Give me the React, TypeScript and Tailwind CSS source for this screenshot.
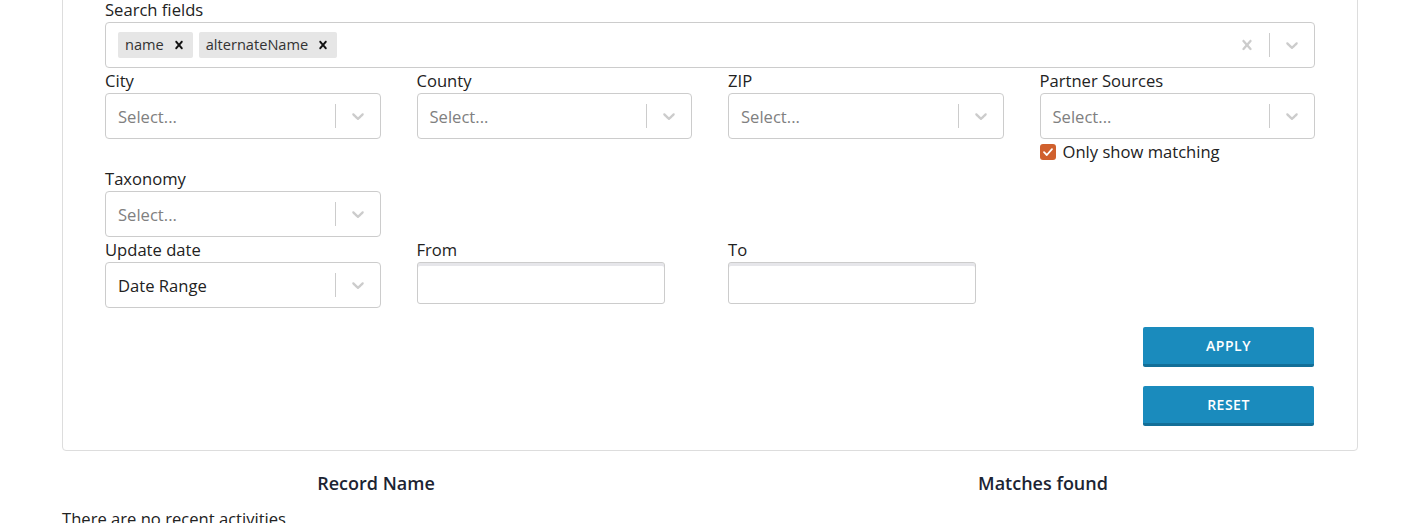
import React from "react";

const Chevron = () => (
  <svg width="20" height="20" viewBox="0 0 20 20" className="fill-[#cccccc]">
    <path d="M4.516 7.548c0.436-0.446 1.043-0.481 1.576 0l3.908 3.747 3.908-3.747c0.533-0.481 1.141-0.446 1.574 0 0.436 0.445 0.408 1.197 0 1.615-0.406 0.418-4.695 4.502-4.695 4.502-0.217 0.223-0.502 0.335-0.787 0.335s-0.57-0.112-0.789-0.335c0 0-4.287-4.084-4.695-4.502s-0.436-1.17 0-1.615z" />
  </svg>
);

const Cross = ({ size = 20, cls = "fill-[#cccccc]" }: { size?: number; cls?: string }) => (
  <svg width={size} height={size} viewBox="0 0 20 20" className={cls}>
    <path d="M14.348 14.849c-0.469 0.469-1.229 0.469-1.697 0l-2.651-3.030-2.651 3.029c-0.469 0.469-1.229 0.469-1.697 0-0.469-0.469-0.469-1.229 0-1.697l2.758-3.150-2.759-3.152c-0.469-0.469-0.469-1.228 0-1.697s1.228-0.469 1.697 0l2.652 3.031 2.651-3.031c0.469-0.469 1.228-0.469 1.697 0s0.469 1.229 0 1.697l-2.758 3.152 2.758 3.150c0.469 0.469 0.469 1.229 0 1.698z" />
  </svg>
);

const Label = ({ children }: { children: React.ReactNode }) => (
  <div className="h-[24px] leading-[24px] text-[16.6px] text-[#222]">{children}</div>
);

const Select = ({ value, placeholder = "Select..." }: { value?: string; placeholder?: string }) => (
  <div className="flex h-[46px] items-center rounded-[4px] border border-[#cccccc] bg-white">
    <div className={`flex-1 pl-[12px] pt-[2px] text-[16.6px] ${value ? "text-[#222]" : "text-[#808080]"}`}>
      {value ?? placeholder}
    </div>
    <div className="h-[24px] w-px bg-[#cccccc]" />
    <div className="flex w-[44px] justify-center">
      <Chevron />
    </div>
  </div>
);

const Chip = ({ text }: { text: string }) => (
  <div className="flex h-[26px] items-center rounded-[2px] bg-[#e6e6e6] pl-[7px] pr-[6px] text-[14.6px] text-[#333]">
    <span>{text}</span>
    <span className="ml-[7px] flex items-center">
      <Cross size={16} cls="fill-[#111]" />
    </span>
  </div>
);

const DateInput = () => (
  <div className="h-[42px] w-[248px] rounded-[3px] border border-[#cccccc] bg-white shadow-[inset_0_3px_0_#e6e6ea]" />
);

export default function App() {
  return (
    <div className="min-h-[523px] bg-white" style={{ fontFamily: '"Open Sans", "Noto Sans", sans-serif' }}>
      <div className="ml-[62px] mt-[-30px] w-[1296px] rounded-[4px] border border-[#dddddd] px-[42px] pb-[24px] pt-[27px]">
        <Label>Search fields</Label>
        <div className="flex h-[46px] items-center rounded-[4px] border border-[#cccccc] bg-white">
          <div className="flex flex-1 gap-[6px] pl-[12px]">
            <Chip text="name" />
            <Chip text="alternateName" />
          </div>
          <div className="flex w-[44px] justify-center">
            <Cross />
          </div>
          <div className="h-[24px] w-px bg-[#cccccc]" />
          <div className="flex w-[44px] justify-center">
            <Chevron />
          </div>
        </div>
        <div className="mt-[1px] grid grid-cols-4 gap-x-[36px]">
          <div>
            <Label>City</Label>
            <Select />
          </div>
          <div>
            <Label>County</Label>
            <Select />
          </div>
          <div>
            <Label>ZIP</Label>
            <Select />
          </div>
          <div>
            <Label>Partner Sources</Label>
            <Select />
            <div className="flex h-[28px] items-center gap-[7px] pb-[2px]">
              <span className="flex h-[16px] w-[16px] items-center justify-center rounded-[3px] bg-[#d0602d]">
                <svg width="12" height="12" viewBox="0 0 12 12" fill="none">
                  <path d="M2 6.2 L4.8 9 L10 3.2" stroke="white" strokeWidth="1.8" strokeLinecap="round" strokeLinejoin="round" />
                </svg>
              </span>
              <span className="text-[16.6px] text-[#222]">Only show matching</span>
            </div>
          </div>
          <div>
            <Label>Taxonomy</Label>
            <Select />
          </div>
          <div />
          <div />
          <div />
          <div className="mt-[1px]">
            <Label>Update date</Label>
            <Select value="Date Range" />
          </div>
          <div className="mt-[1px]">
            <Label>From</Label>
            <DateInput />
          </div>
          <div className="mt-[1px]">
            <Label>To</Label>
            <DateInput />
          </div>
          <div />
        </div>
        <div className="mt-[19px] mr-px flex flex-col items-end gap-[19px]">
          <button className="h-[40px] w-[171px] rounded-[2px] border-b-[3px] border-[#136f98] bg-[#1a8bbd] text-[14px] font-semibold tracking-[0.5px] text-white">
            APPLY
          </button>
          <button className="h-[40px] w-[171px] rounded-[2px] border-b-[3px] border-[#136f98] bg-[#1a8bbd] text-[14px] font-semibold tracking-[0.5px] text-white">
            RESET
          </button>
        </div>
      </div>
      <div className="ml-[62px] mt-[18px] flex h-[28px] items-center text-[18px] font-semibold text-[#1c2433]">
        <div className="w-[628px] text-center">Record Name</div>
        <div className="w-[706px] text-center">Matches found</div>
      </div>
      <div className="ml-[62px] mt-[10px] text-[16.6px] text-[#222]">There are no recent activities</div>
    </div>
  );
}
